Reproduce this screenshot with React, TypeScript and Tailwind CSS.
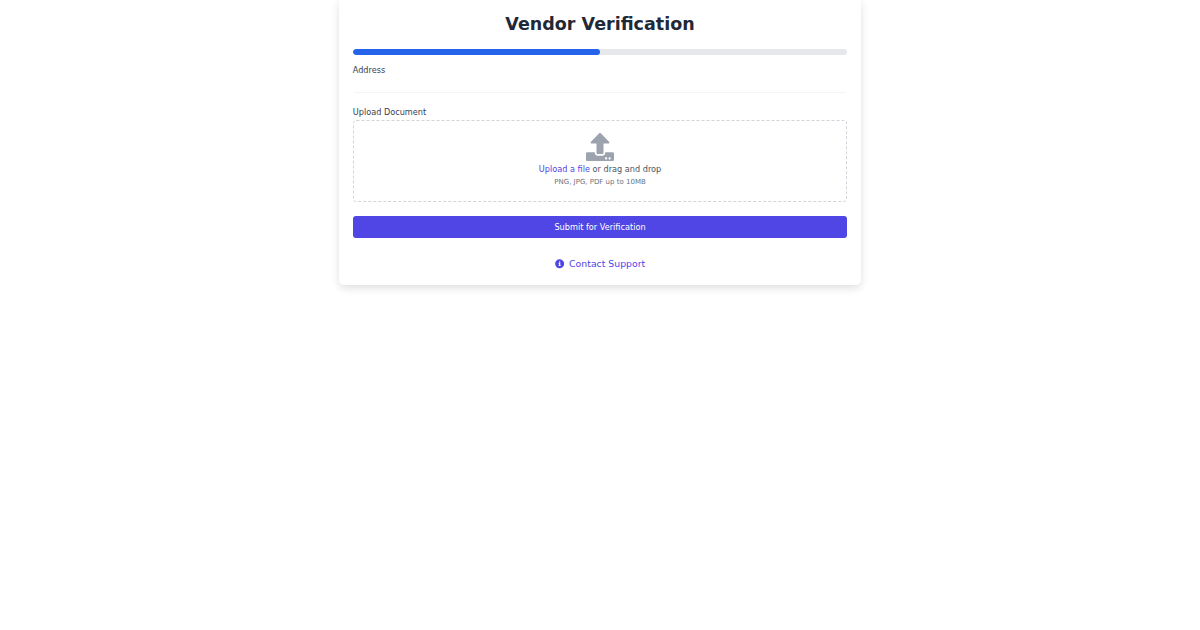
import React from "react";
import { FaUpload, FaInfoCircle } from "react-icons/fa";

export default function App() {
  return (
    <div className="min-h-[630px] bg-white font-['DejaVu_Sans',sans-serif]">
      <div className="mx-auto w-[522.5px] rounded-b-[5px] bg-white px-[14px] pt-[14px] pb-[13.5px] shadow-[0_3px_9px_rgba(0,0,0,0.13)]">
        <h1 className="text-center text-[17.5px] leading-[21px] font-bold text-[#1f2937]">Vendor Verification</h1>
        <div className="mt-[14px] h-[6px] w-full overflow-hidden rounded-full bg-[#e5e7eb]">
          <div className="h-full w-1/2 rounded-full bg-[#2563eb]" />
        </div>
        <label className="mt-[10px] block text-[8.17px] leading-[11px] text-[#374151]">Address</label>
        <div className="mt-[3px] h-[14px] rounded-[3.5px] border-b border-[#f3f4f6]" />
        <label className="mt-[13.5px] block text-[8.17px] leading-[11px] text-[#374151]">Upload Document</label>
        <div className="mt-[2.5px] flex h-[82px] flex-col items-center rounded-[3.5px] border border-dashed border-[#d1d5db] pt-[12px]">
          <FaUpload className="h-[28px] w-[28px] text-[#9ca3af]" />
          <p className="mt-[1px] text-[8.17px] leading-[14px] text-[#4b5563]">
            <span className="text-[#4f46e5]">Upload a file</span> or drag and drop
          </p>
          <p className="mt-[1px] text-[7px] leading-[11px] text-[#6b7280]">PNG, JPG, PDF up to 10MB</p>
        </div>
        <button className="mt-[14px] flex h-[22px] w-full items-center justify-center rounded-[3px] bg-[#4f46e5] text-[8.17px] text-white">
          Submit for Verification
        </button>
        <div className="mt-[19px] flex items-center justify-center gap-[5px] text-[9.33px] leading-[14px] text-[#4f46e5]">
          <FaInfoCircle className="h-[9.33px] w-[9.33px]" />
          <span>Contact Support</span>
        </div>
      </div>
    </div>
  );
}
